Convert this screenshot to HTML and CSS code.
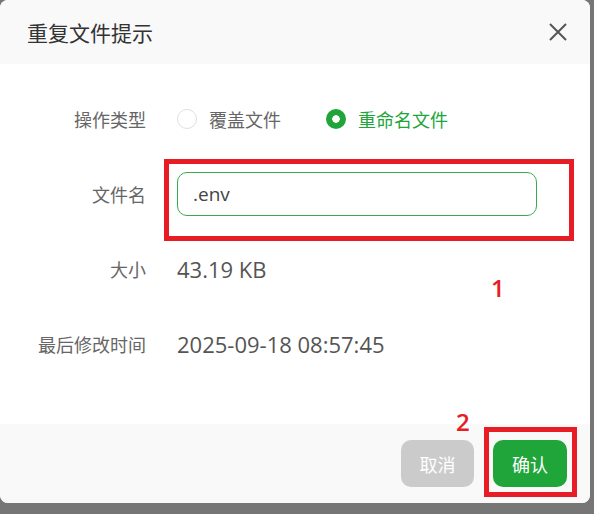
FILE: index.html
```html
<!DOCTYPE html>
<html lang="zh-CN">
<head>
<meta charset="utf-8">
<title>重复文件提示</title>
<link rel="stylesheet" href="styles.css">
</head>
<body>
<div class="dialog">
  <div class="header">
    <span class="title">重复文件提示</span>
    <span class="close" aria-label="关闭">
      <svg width="18" height="18" viewBox="0 0 18 18"><path d="M1 1L17 17M17 1L1 17" stroke="#555" stroke-width="2" fill="none"/></svg>
    </span>
  </div>
  <div class="body">
    <div class="row">
      <div class="label">操作类型</div>
      <div class="content radios">
        <label class="radio"><span class="dot"></span><span>覆盖文件</span></label>
        <label class="radio checked"><span class="dot"></span><span>重命名文件</span></label>
      </div>
    </div>
    <div class="row">
      <div class="label">文件名</div>
      <div class="content"><div class="input">.env</div></div>
    </div>
    <div class="row">
      <div class="label">大小</div>
      <div class="content value">43.19 KB</div>
    </div>
    <div class="row">
      <div class="label">最后修改时间</div>
      <div class="content value">2025-09-18 08:57:45</div>
    </div>
  </div>
  <div class="footer">
    <button class="btn cancel">取消</button>
    <button class="btn ok">确认</button>
  </div>
  <div class="mark mark-input"></div>
  <div class="mark mark-btn"></div>
  <div class="num num1">1</div>
  <div class="num num2">2</div>
</div>
</body>
</html>
```
FILE: styles.css
```css
html, body {
  margin: 0;
  padding: 0;
  background: #767676;
  width: 594px;
  height: 514px;
  overflow: hidden;
}
body {
  font-family: "Open Sans", "Noto Sans CJK SC", sans-serif;
}
.dialog {
  position: relative;
  width: 590px;
  height: 503px;
  background: #fff;
  border-radius: 8px;
  overflow: hidden;
  display: flex;
  flex-direction: column;
}
.header {
  height: 64px;
  background: #f9f9f9;
  display: flex;
  align-items: center;
  justify-content: space-between;
  padding: 0 23px 0 27px;
  flex-shrink: 0;
}
.title {
  font-size: 21px;
  color: #333;
  font-family: "Noto Sans CJK SC", sans-serif;
}
.close {
  display: flex;
  width: 18px;
  height: 18px;
}
.body {
  flex: 1;
  padding-top: 33px;
  display: flex;
  flex-direction: column;
  gap: 31px;
}
.row {
  display: flex;
  align-items: center;
  height: 44px;
}
.label {
  width: 146px;
  text-align: right;
  font-size: 18px;
  color: #666;
  font-family: "Noto Sans CJK SC", sans-serif;
  flex-shrink: 0;
}
.content {
  margin-left: 31px;
}
.radios {
  display: flex;
  align-items: center;
  gap: 45px;
}
.radio {
  display: flex;
  align-items: center;
  gap: 12px;
  font-size: 18px;
  color: #666;
  font-family: "Noto Sans CJK SC", sans-serif;
}
.radio .dot {
  width: 18px;
  height: 18px;
  border: 1px solid #dcdfe6;
  border-radius: 50%;
  box-sizing: content-box;
  background: #fff;
}
.radio.checked {
  color: #20a53a;
}
.radio.checked .dot {
  width: 20px;
  height: 20px;
  border: none;
  background: radial-gradient(circle, #fff 0 3.5px, #20a53a 4px);
}
.input {
  width: 360px;
  height: 44px;
  box-sizing: border-box;
  border: 1px solid #3aab4d;
  border-radius: 10px;
  padding-left: 15px;
  display: flex;
  align-items: center;
  font-size: 19px;
  color: #444;
}
.value {
  font-size: 22px;
  color: #555;
}
.footer {
  height: 79px;
  background: #f9f9f9;
  display: flex;
  justify-content: flex-end;
  align-items: flex-start;
  padding: 16px 23px 0 0;
  box-sizing: border-box;
  gap: 19px;
  flex-shrink: 0;
}
.btn {
  height: 47px;
  width: 74px;
  border: none;
  border-radius: 10px;
  color: #fff;
  font-size: 18px;
  font-family: "Noto Sans CJK SC", sans-serif;
  padding: 0;
}
.cancel {
  background: #cbcbcb;
  width: 73px;
}
.ok {
  background: #20a53a;
}
.mark {
  position: absolute;
  border: 5px solid #e81c24;
  box-sizing: border-box;
}
.mark-input {
  left: 164px;
  top: 159px;
  width: 410px;
  height: 82px;
}
.mark-btn {
  left: 484px;
  top: 427px;
  width: 93px;
  height: 70px;
}
.num {
  position: absolute;
  color: #e81c24;
  font-weight: 600;
  font-size: 24px;
  line-height: 24px;
  font-family: "Open Sans", sans-serif;
}
.num1 {
  left: 491px;
  top: 276px;
}
.num2 {
  left: 456px;
  top: 410px;
}
```
